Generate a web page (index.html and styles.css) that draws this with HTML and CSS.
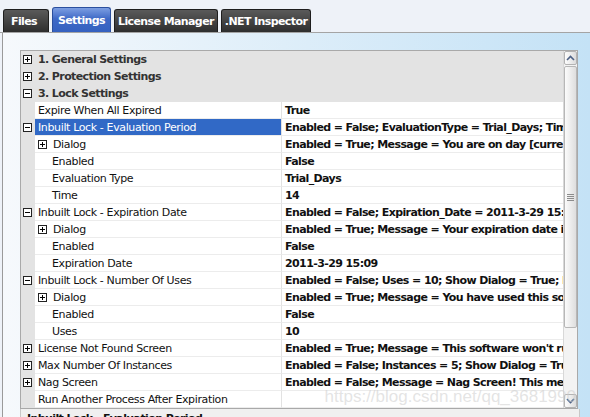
FILE: index.html
```html
<!DOCTYPE html>
<html lang="en">
<head>
    <meta charset="UTF-8">
    <title>Settings</title>
    <link rel="stylesheet" href="styles.css">
</head>
<body>
    <div class="tabs">
        <div class="tab tab-files">Files</div>
        <div class="tab tab-active">Settings</div>
        <div class="tab">License Manager</div>
        <div class="tab">.NET Inspector</div>
    </div>
    <div class="panel">
        <div class="grid">
            <div class="rows">
                <div class="row category"><span class="gutter"><span class="box plus"></span></span><span class="name">1. General Settings</span></div>
                <div class="row category"><span class="gutter"><span class="box plus"></span></span><span class="name">2. Protection Settings</span></div>
                <div class="row category"><span class="gutter"><span class="box minus"></span></span><span class="name">3. Lock Settings</span></div>
                <div class="row"><span class="gutter"></span><span class="name">Expire When All Expired</span><span class="value">True</span></div>
                <div class="row"><span class="gutter"><span class="box minus"></span></span><span class="name selected">Inbuilt Lock - Evaluation Period</span><span class="value">Enabled = False; EvaluationType = Trial_Days; Time = 14</span></div>
                <div class="row"><span class="gutter"></span><span class="name sub"><span class="box plus"></span>Dialog</span><span class="value">Enabled = True; Message = You are on day [current_day] of your trial</span></div>
                <div class="row"><span class="gutter"></span><span class="name sub">Enabled</span><span class="value">False</span></div>
                <div class="row"><span class="gutter"></span><span class="name sub">Evaluation Type</span><span class="value">Trial_Days</span></div>
                <div class="row"><span class="gutter"></span><span class="name sub">Time</span><span class="value">14</span></div>
                <div class="row"><span class="gutter"><span class="box minus"></span></span><span class="name">Inbuilt Lock - Expiration Date</span><span class="value">Enabled = False; Expiration_Date = 2011-3-29 15:09</span></div>
                <div class="row"><span class="gutter"></span><span class="name sub"><span class="box plus"></span>Dialog</span><span class="value">Enabled = True; Message = Your expiration date is reached</span></div>
                <div class="row"><span class="gutter"></span><span class="name sub">Enabled</span><span class="value">False</span></div>
                <div class="row"><span class="gutter"></span><span class="name sub">Expiration Date</span><span class="value">2011-3-29 15:09</span></div>
                <div class="row"><span class="gutter"><span class="box minus"></span></span><span class="name">Inbuilt Lock - Number Of Uses</span><span class="value">Enabled = False; Uses = 10; Show Dialog = True; Message</span></div>
                <div class="row"><span class="gutter"></span><span class="name sub"><span class="box plus"></span>Dialog</span><span class="value">Enabled = True; Message = You have used this software [used] times</span></div>
                <div class="row"><span class="gutter"></span><span class="name sub">Enabled</span><span class="value">False</span></div>
                <div class="row"><span class="gutter"></span><span class="name sub">Uses</span><span class="value">10</span></div>
                <div class="row"><span class="gutter"><span class="box plus"></span></span><span class="name">License Not Found Screen</span><span class="value">Enabled = True; Message = This software won't run without a license</span></div>
                <div class="row"><span class="gutter"><span class="box plus"></span></span><span class="name">Max Number Of Instances</span><span class="value">Enabled = False; Instances = 5; Show Dialog = True</span></div>
                <div class="row"><span class="gutter"><span class="box plus"></span></span><span class="name">Nag Screen</span><span class="value">Enabled = False; Message = Nag Screen! This message</span></div>
                <div class="row"><span class="gutter"></span><span class="name">Run Another Process After Expiration</span><span class="value"></span></div>
            </div>
            <div class="scrollbar">
                <div class="sb-btn"><svg width="9" height="6" viewBox="0 0 9 6"><path d="M1 5 L4.5 1.5 L8 5" fill="none" stroke="#4d6185" stroke-width="1.6"/></svg></div>
                <div class="sb-thumb"><span class="grip"></span></div>
                <div class="sb-track"></div>
                <div class="sb-btn"><svg width="9" height="6" viewBox="0 0 9 6"><path d="M1 1 L4.5 4.5 L8 1" fill="none" stroke="#4d6185" stroke-width="1.6"/></svg></div>
            </div>
            <div class="watermark">https://blog.csdn.net/qq_3681990</div>
        </div>
        <div class="description">Inbuilt Lock - Evaluation Period</div>
    </div>
</body>
</html>
```

FILE: styles.css
```css
body {
    margin: 0;
    width: 590px;
    height: 417px;
    overflow: hidden;
    background: #eef2f8;
    font-family: 'DejaVu Sans', Verdana, sans-serif;
    font-size: 11px;
    letter-spacing: -0.37px;
    color: #111;
}

.tabs {
    display: flex;
    align-items: flex-end;
    height: 33px;
    padding-left: 3px;
    gap: 3px;
    border-bottom: 1px solid #a4a4a4;
    box-sizing: border-box;
}

.tab {
    height: 23px;
    padding: 0 3px;
    box-sizing: border-box;
    display: flex;
    align-items: center;
    justify-content: center;
    font-weight: bold;
    font-size: 11px;
    letter-spacing: -0.6px;
    color: #fff;
    background: linear-gradient(#5a5a5a, #2e2e2e);
    border: 1px solid #1e1e1e;
    border-bottom: none;
    border-radius: 3px 3px 0 0;
}

.tab-files {
    width: 46px;
    justify-content: flex-start;
    padding-left: 7px;
}

.tab-active {
    width: 59px;
    height: 25px;
    padding: 0 2px;
    background: linear-gradient(#7c9ee2, #3f69c6 45%, #3561c0);
    border-color: #2a4f9e;
}

.panel {
    height: 383px;
    margin-left: 2px;
    border-left: 1px solid #9a9a9a;
    background: linear-gradient(to right, #f6f9fc, #c4e2f6);
    padding: 17px 12px 0 17px;
}

.grid {
    position: relative;
    display: flex;
    height: 357px;
    border: 1px solid #a9a9a9;
    background: #fff;
}

.rows {
    flex: 1;
    overflow: hidden;
}

.row {
    display: flex;
    height: 17px;
    white-space: nowrap;
}

.gutter {
    flex: none;
    width: 14px;
    background: #e3e3e3;
    display: flex;
    align-items: center;
    justify-content: center;
    padding-right: 1px;
    box-sizing: border-box;
}

.name {
    flex: none;
    width: 247px;
    padding: 1px 0 0 3px;
    line-height: 15px;
    box-sizing: border-box;
    border-bottom: 1px solid #ececec;
    border-right: 1px solid #e2e2e2;
    display: flex;
    align-items: center;
    overflow: hidden;
}

.name.sub:not(:has(.box)) {
    padding-left: 17px;
}

.name .box {
    margin-right: 6px;
}

.selected {
    background: #3169c6;
    color: #fff;
}

.value {
    flex: 1;
    padding: 1px 0 0 3px;
    line-height: 15px;
    box-sizing: border-box;
    font-weight: bold;
    letter-spacing: -0.6px;
    border-bottom: 1px solid #ececec;
    overflow: hidden;
}

.category {
    background: #e3e3e3;
}

.category .name {
    width: auto;
    flex: 1;
    padding-top: 0;
    line-height: 17px;
    font-weight: bold;
    letter-spacing: -0.6px;
    color: #333;
    border: none;
}

.box {
    position: relative;
    display: inline-block;
    width: 9px;
    height: 9px;
    box-sizing: border-box;
    border: 1px solid #222;
    background: #fff;
    flex: none;
}

.box::before {
    content: "";
    position: absolute;
    left: 1px;
    top: 3px;
    width: 5px;
    height: 1px;
    background: #000;
}

.box.plus::after {
    content: "";
    position: absolute;
    left: 3px;
    top: 1px;
    width: 1px;
    height: 5px;
    background: #000;
}

.scrollbar {
    flex: none;
    width: 13px;
    display: flex;
    flex-direction: column;
    background: #f3f3f3;
    border-left: 1px solid #d8d8d8;
}

.sb-btn {
    height: 14px;
    box-sizing: border-box;
    border: 1px solid #b3b3b3;
    border-radius: 2px;
    background: linear-gradient(to right, #fdfdfd, #dcdcdc);
    display: flex;
    align-items: center;
    justify-content: center;
}

.sb-thumb {
    height: 262px;
    margin-top: 1px;
    box-sizing: border-box;
    border: 1px solid #b7b7b7;
    border-radius: 2px;
    background: linear-gradient(to right, #fbfbfb, #dedede);
    display: flex;
    align-items: center;
    justify-content: center;
}

.grip {
    width: 7px;
    height: 7px;
    background: repeating-linear-gradient(#8c8c8c 0 1px, transparent 1px 2px);
}

.sb-track {
    flex: 1;
}

.watermark {
    position: absolute;
    right: 1px;
    bottom: 1px;
    font-family: 'Liberation Sans', Arial, sans-serif;
    font-size: 17px;
    letter-spacing: 0;
    color: rgba(205, 205, 205, 0.55);
    pointer-events: none;
}

.description {
    height: 20px;
    margin-right: -2px;
    border: 1px solid #c8c8c8;
    border-top: none;
    background: #f0f0f0;
    padding: 3px 0 0 6px;
    font-weight: bold;
    letter-spacing: -0.6px;
}
```
